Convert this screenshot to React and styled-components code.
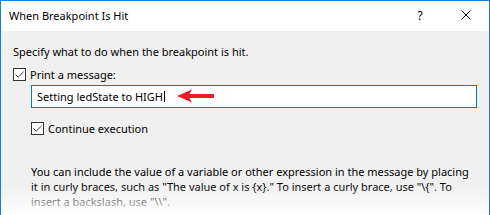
import React from "react";
import styled, { createGlobalStyle } from "styled-components";

const Global = createGlobalStyle`
  html, body { margin: 0; padding: 0; background: #ffffff; }
  body { font-family: "Noto Sans", "Open Sans", sans-serif; }
  * { box-sizing: border-box; }
`;

const Window = styled.div`
  position: relative;
  width: 490px;
  height: 215px;
  border: 1px solid #1a7fd4;
  border-bottom: none;
  overflow: hidden;
  display: flex;
  flex-direction: column;
  background: #f0f0f0;
  font-size: 11px;
  line-height: 15px;
  color: #000;
`;

const TitleBar = styled.div`
  height: 30px;
  padding-bottom: 2px;
  background: #ffffff;
  display: flex;
  align-items: center;
  flex-shrink: 0;
`;

const Title = styled.div`
  flex: 1;
  padding-left: 8px;
`;

const TitleButton = styled.div`
  width: 46px;
  height: 28px;
  display: flex;
  align-items: center;
  justify-content: center;
  font-size: 12px;
`;

const Body = styled.div`
  padding: 13px 12px 0 12px;
  display: flex;
  flex-direction: column;
`;

const Label = styled.div`
  margin-bottom: ${(p) => p.$mb || 0}px;
`;

const CheckRow = styled.div`
  display: flex;
  align-items: center;
  gap: 4px;
  margin-left: ${(p) => p.$indent || 0}px;
  margin-top: ${(p) => p.$mt || 0}px;
`;

const Box = styled.div`
  width: 13px;
  height: 13px;
  border: 1px solid #333;
  background: #fff;
  display: flex;
  align-items: center;
  justify-content: center;
`;

const Input = styled.div`
  margin-left: 18px;
  margin-top: ${(p) => p.$mt || 0}px;
  width: 446px;
  height: 23px;
  border: 1px solid #0078d7;
  background: #fff;
  display: flex;
  align-items: center;
  padding: 0 0 1px 5px;
`;

const Caret = styled.span`
  width: 1px;
  height: 11px;
  background: #000;
  margin-left: 1px;
`;

const Arrow = styled.svg`
  margin-left: 12px;
  display: block;
`;

const Paragraph = styled.div`
  margin-left: 18px;
  margin-top: ${(p) => p.$mt || 0}px;
`;

const Line = styled.div`
  white-space: nowrap;
`;

const Fade = styled.div`
  position: absolute;
  left: -1px;
  right: -1px;
  bottom: 0;
  height: 29px;
  background: linear-gradient(rgba(255,255,255,0), rgba(255,255,255,0.96));
  pointer-events: none;
`;

const HELP_LINES = [
  "You can include the value of a variable or other expression in the message by placing",
  'it in curly braces, such as "The value of x is {x}." To insert a curly brace, use "\\{". To',
  'insert a backslash, use "\\\\".',
];

const Check = () => (
  <Box>
    <svg width="11" height="11" viewBox="0 0 11 11">
      <path d="M1.5 5.5 L4.2 8.2 L9.6 2.8" fill="none" stroke="#333" strokeWidth="1" />
    </svg>
  </Box>
);

export default function App() {
  return (
    <>
      <Global />
      <Window>
        <TitleBar>
          <Title>When Breakpoint Is Hit</Title>
          <TitleButton>?</TitleButton>
          <TitleButton>
            <svg width="10" height="10" viewBox="0 0 10 10">
              <path d="M0.5 0.5 L9.5 9.5 M9.5 0.5 L0.5 9.5" stroke="#000" strokeWidth="1" />
            </svg>
          </TitleButton>
        </TitleBar>
        <Body>
          <Label $mb={8}>Specify what to do when the breakpoint is hit.</Label>
          <CheckRow>
            <Check />
            <span>Print a message:</span>
          </CheckRow>
          <Input $mt={3}>
            <span>Setting ledState to HIGH</span>
            <Caret />
            <Arrow width="37" height="14" viewBox="0 0 37 14">
              <polygon points="0,7 15,0.5 12.5,5 37,5 37,9 12.5,9 15,13.5" fill="#ee1c24" />
            </Arrow>
          </Input>
          <CheckRow $indent={18} $mt={13}>
            <Check />
            <span>Continue execution</span>
          </CheckRow>
          <Paragraph $mt={28}>
            {HELP_LINES.map((l, i) => (
              <Line key={i}>{l}</Line>
            ))}
          </Paragraph>
        </Body>
        <Fade />
      </Window>
    </>
  );
}
